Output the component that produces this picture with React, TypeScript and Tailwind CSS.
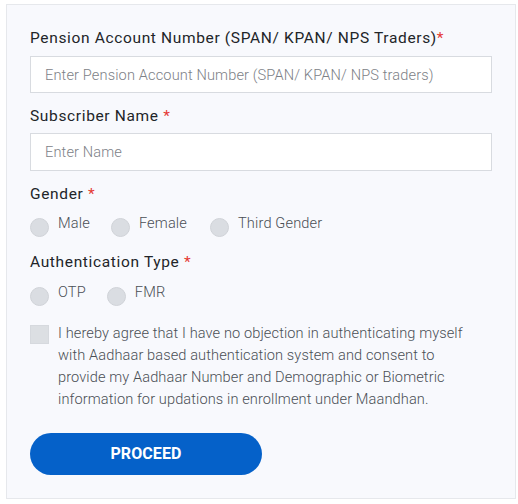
import React, { useState } from 'react';

const labelCls = "block text-[15.5px] leading-[20px] tracking-[0.65px] text-[#222529] font-normal";

function Radio({ label, gap }: { label: string; gap: string }) {
  return (
    <label className={`flex items-center ${gap} cursor-pointer`}>
      <span className="w-[19px] h-[19px] rounded-full bg-[#dadde2] border border-[#d0d3d8] shrink-0 mt-[6px]" />
      <span className="ml-[9px] text-[14.6px] font-light tracking-[0.15px] text-[#4a4f55]">{label}</span>
    </label>
  );
}

export default function App() {
  const [agree, setAgree] = useState(false);

  return (
    <div className="w-[518px] h-[504px] bg-white pt-[4px] pl-[6px] font-['Roboto',sans-serif]">
      <div className="w-[510px] h-[495px] bg-[#f8f9fd] border border-[#e6e8ec] pl-[23px] pr-[21px] pt-[23px]">
        {/* Pension account */}
        <label className={labelCls}>
          Pension Account Number (SPAN/ KPAN/ NPS Traders)<span className="text-[#e53935]">*</span>
        </label>
        <input
          placeholder="Enter Pension Account Number (SPAN/ KPAN/ NPS traders)"
          className="mt-[8px] w-[462px] h-[37px] bg-white border border-[#d8dbe0] px-[14px] text-[14.6px] font-light tracking-[0.13px] text-[#333] placeholder-[#7d8187] focus:outline-none"
        />

        {/* Subscriber name */}
        <label className={`${labelCls} mt-[13px]`}>
          Subscriber Name <span className="text-[#e53935]">*</span>
        </label>
        <input
          placeholder="Enter Name"
          className="mt-[7px] w-[462px] h-[38px] bg-white border border-[#d8dbe0] px-[14px] text-[14.6px] font-light tracking-[0.13px] text-[#333] placeholder-[#7d8187] focus:outline-none"
        />

        {/* Gender */}
        <label className={`${labelCls} mt-[13px]`}>
          Gender <span className="text-[#e53935]">*</span>
        </label>
        <div className="flex items-center h-[24px] mt-[8px]">
          <Radio label="Male" gap="mr-[21px]" />
          <Radio label="Female" gap="mr-[23px]" />
          <Radio label="Third Gender" gap="" />
        </div>

        {/* Authentication */}
        <label className={`${labelCls} mt-[16px]`}>
          Authentication Type <span className="text-[#e53935]">*</span>
        </label>
        <div className="flex items-center h-[24px] mt-[9px]">
          <Radio label="OTP" gap="mr-[21px]" />
          <Radio label="FMR" gap="" />
        </div>

        {/* Consent */}
        <div className="flex mt-[17px]">
          <button
            onClick={() => setAgree(!agree)}
            className={`w-[19px] h-[19px] shrink-0 mt-[3px] border border-[#d6d9de] ${agree ? 'bg-[#0561c9]' : 'bg-[#dcdfe3]'}`}
          />
          <p className="ml-[9px] pr-[20px] text-[14.6px] font-light tracking-[0.1px] leading-[22px] text-[#4a4f55]">
            I hereby agree that I have no objection in authenticating myself with Aadhaar based authentication system and consent to provide my Aadhaar Number and Demographic or Biometric information for updations in enrollment under Maandhan.
          </p>
        </div>

        <button className="mt-[23px] w-[232px] h-[42px] rounded-full bg-[#0561c9] text-white text-[16px] font-bold tracking-[0.1px]">
          PROCEED
        </button>
      </div>
    </div>
  );
}
